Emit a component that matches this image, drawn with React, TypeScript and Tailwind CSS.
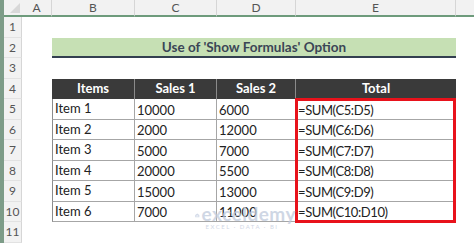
import React from 'react';

const columns = ['A', 'B', 'C', 'D', 'E'];

const rows = [
  { item: 'Item 1', s1: '10000', s2: '6000', f: '=SUM(C5:D5)' },
  { item: 'Item 2', s1: '2000', s2: '12000', f: '=SUM(C6:D6)' },
  { item: 'Item 3', s1: '5000', s2: '7000', f: '=SUM(C7:D7)' },
  { item: 'Item 4', s1: '20000', s2: '5500', f: '=SUM(C8:D8)' },
  { item: 'Item 5', s1: '15000', s2: '13000', f: '=SUM(C9:D9)' },
  { item: 'Item 6', s1: '7000', s2: '11000', f: '=SUM(C10:D10)' },
];

const font = { fontFamily: 'Lato, "Open Sans", sans-serif' };

const Watermark: React.FC = () => (
  <div className="flex items-start gap-[2px] text-[#bfcadc] opacity-75 select-none">
    <svg width="17" height="17" viewBox="0 0 20 20" className="mt-[3px]">
      <path d="M10 1 L19 8 L19 18 L1 18 L1 8 Z" fill="#c3cde0" />
      <path d="M5 11 L10 7 L15 11 L15 15 L5 15 Z" fill="#e3e8f1" />
    </svg>
    <div className="flex flex-col leading-none">
      <span className="text-[19px] font-bold tracking-[0.5px]">exceldemy</span>
      <span className="text-[6px] tracking-[1.5px] mt-[1px] ml-[4px]">EXCEL · DATA · BI</span>
    </div>
  </div>
);

const App: React.FC = () => {
  return (
    <div className="w-[474px] h-[245px] overflow-hidden bg-white" style={font}>
      <div className="grid grid-cols-[4px_18px_30px_83px_82px_79px_160px_18px] grid-rows-[17px_21px_20px_21px_20px_21px_20px_21px_20px_21px_20px_21px]">
        {/* window edge */}
        <div className="col-start-1 row-start-1 row-span-12 bg-[#7d9c88]" />

        {/* corner + column headers */}
        <div className="col-start-2 row-start-1 bg-[#f2f2f2] border-b-2 border-[#6e9b7c] relative">
          <svg width="10" height="10" viewBox="0 0 10 10" className="absolute right-[2px] bottom-[2px]">
            <path d="M10 0 L10 10 L0 10 Z" fill="#d8d8d8" />
          </svg>
        </div>
        {columns.map((c, i) => (
          <div
            key={c}
            className="row-start-1 bg-[#f2f2f2] border-b-2 border-[#6e9b7c] border-r border-r-[#d6d6d6] flex items-center justify-center text-[12px] text-[#555]"
            style={{ gridColumnStart: i + 3 }}
          >
            {c}
          </div>
        ))}
        <div className="col-start-8 row-start-1 bg-[#f2f2f2] border-b-2 border-[#6e9b7c]" />

        {/* row numbers */}
        {Array.from({ length: 11 }, (_, i) => (
          <div
            key={i}
            className="col-start-2 bg-[#f2f2f2] border-r border-[#d6d6d6] border-b border-b-[#e2e2e2] flex items-center justify-center text-[12px] text-[#555]"
            style={{ gridRowStart: i + 2 }}
          >
            {i + 1}
          </div>
        ))}

        {/* title bar */}
        <div className="col-start-4 col-span-4 row-start-3 bg-[#c6e0b4] border-b-[2px] border-[#333f50] flex items-center justify-center text-[13.5px] font-bold text-[#3b4656]">
          Use of 'Show Formulas' Option
        </div>

        {/* table header */}
        {['Items', 'Sales 1', 'Sales 2', 'Total'].map((h, i) => (
          <div
            key={h}
            className={`row-start-5 bg-[#3a3a3a] flex items-center justify-center text-[13px] font-bold text-white ${i < 3 ? 'border-r border-[#8a8a8a]' : ''}`}
            style={{ gridColumnStart: i + 4 }}
          >
            {h}
          </div>
        ))}

        {/* table body */}
        {rows.map((r, ri) =>
          [r.item, r.s1, r.s2, r.f].map((v, ci) => (
            <div
              key={`${ri}-${ci}`}
              className={`border-b border-[#a6a6a6] ${ci === 0 ? 'border-l border-l-[#8c8c8c]' : ''} ${ci < 3 ? 'border-r' : 'border-r border-r-[#8c8c8c] tracking-[-0.4px]'} flex ${ci === 0 ? 'items-start pt-[1px]' : 'items-end pb-[1px]'} pl-[2px] text-[13px] text-[#222] leading-[16px]`}
              style={{ gridRowStart: ri + 6, gridColumnStart: ci + 4 }}
            >
              {v}
            </div>
          ))
        )}

        {/* highlighted formula range */}
        <div className="col-start-7 row-start-6 row-span-6 border-[3px] border-[#e8121b] -ml-[1px] -mt-[1px] -mb-[1px] pointer-events-none z-10" />

        {/* watermark */}
        <div className="col-start-5 col-span-2 row-start-11 row-span-2 pl-[60px] pt-[2px] z-20">
          <Watermark />
        </div>
      </div>
    </div>
  );
};

export default App;
